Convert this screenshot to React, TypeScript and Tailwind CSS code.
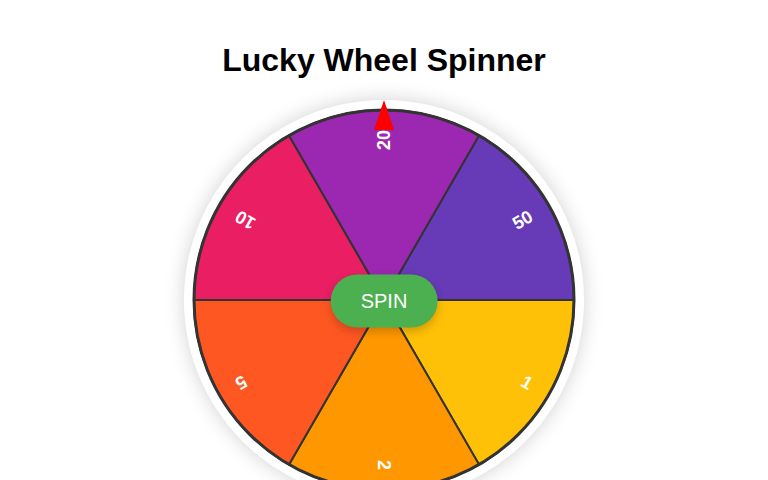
import React from "react";

const segments = [
  { label: "50", color: "#673ab7", start: -60 },
  { label: "1", color: "#ffc107", start: 0 },
  { label: "2", color: "#ff9800", start: 60 },
  { label: "5", color: "#ff5722", start: 120 },
  { label: "10", color: "#e91e63", start: 180 },
  { label: "20", color: "#9c27b0", start: 240 },
];

const C = 192;
const R = 190;

function pt(deg: number, r: number) {
  const a = (deg * Math.PI) / 180;
  return [C + r * Math.cos(a), C + r * Math.sin(a)];
}

export default function App() {
  return (
    <div className="min-h-screen bg-white flex flex-col items-center pt-[42px] font-['Liberation_Sans',Arial,sans-serif]">
      <h1 className="text-[32px] leading-[37px] font-bold text-black">Lucky Wheel Spinner</h1>
      <div className="relative mt-[21px] w-[400px] h-[400px] shrink-0 rounded-full bg-white p-2 shadow-[0_0_20px_rgba(0,0,0,0.18)]">
        <svg width="384" height="384" viewBox="0 0 384 384" className="block">
          {segments.map((s) => {
            const [x1, y1] = pt(s.start, R);
            const [x2, y2] = pt(s.start + 60, R);
            return (
              <path
                key={s.label}
                d={`M ${C} ${C} L ${x1} ${y1} A ${R} ${R} 0 0 1 ${x2} ${y2} Z`}
                fill={s.color}
                stroke="#333"
                strokeWidth="2"
              />
            );
          })}
          <circle cx={C} cy={C} r={R} fill="none" stroke="#333" strokeWidth="3" />
          {segments.map((s) => (
            <text
              key={"t" + s.label}
              transform={`translate(${C} ${C}) rotate(${s.start + 30})`}
              x="170"
              y="6"
              textAnchor="end"
              fill="#ffffff"
              fontWeight="bold"
              fontSize="18"
              fontFamily="'Liberation Sans', Arial, sans-serif"
            >
              {s.label}
            </text>
          ))}
        </svg>
        <svg
          width="20"
          height="30"
          viewBox="0 0 20 30"
          className="absolute top-0 left-1/2 -translate-x-1/2"
        >
          <polygon points="10,0 20,30 0,30" fill="#ff0000" />
        </svg>
        <button className="absolute left-1/2 top-1/2 -translate-x-1/2 -translate-y-[48%] rounded-[50px] bg-[#4caf50] px-[30px] py-[15px] text-[20px] leading-[23px] text-white shadow-[0_4px_10px_rgba(0,0,0,0.2)]">
          SPIN
        </button>
      </div>
    </div>
  );
}
